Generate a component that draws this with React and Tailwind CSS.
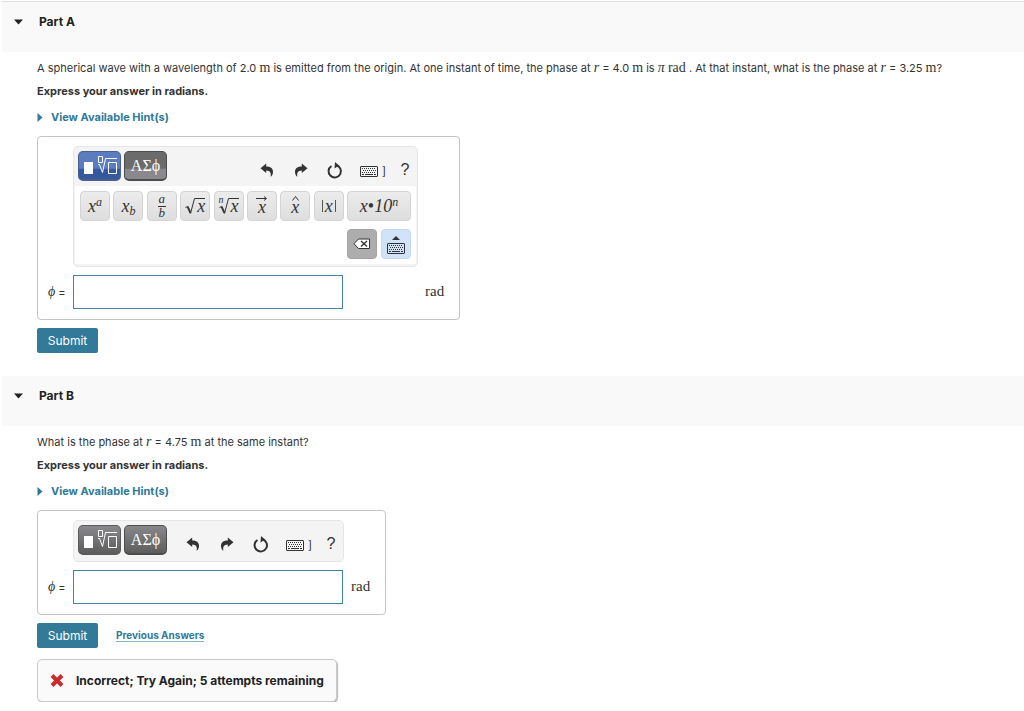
import { useState } from "react";

const toolButton = "flex h-[30px] w-[43px] items-center justify-center rounded-[5px] border border-b-2 text-white";
const keyButton = "flex h-[30px] items-center justify-center rounded-[4px] border border-[#d4d4d4] bg-linear-to-b from-[#ececec] to-[#dedede] font-[Liberation_Serif,serif] text-[18px] leading-none italic text-[#333]";
const mathText = "font-[Liberation_Serif,serif] text-[14px] leading-none";

function Unit({ children }) {
  return <span className={mathText}>{children}</span>;
}

function Var({ children }) {
  return <i className={mathText}>{children}</i>;
}

function TemplateIcon() {
  return (
    <svg width="35" height="23" viewBox="0 0 35 23" fill="none" stroke="currentColor" aria-hidden="true">
      <rect x="2" y="8" width="9" height="12" fill="currentColor" stroke="none" />
      <path d="M16.500 2.500h4v6h-4z" />
      <path d="M16 10.500h1.500l3 8L23.500 4.500H35" />
      <path d="M26.500 8.500h8v11h-8z" />
    </svg>
  );
}

function UndoIcon({ flip }) {
  return (
    <svg width="14" height="14" viewBox="0 0 14 14" fill="currentColor" className={flip ? "-scale-x-100" : ""} aria-hidden="true">
      <path d="M0.500 5.200 6.200 0.500V3.500C10.300 3.500 13 5.400 13 8.700C13 11 12.200 12.700 10.600 13.800C11.300 10.200 10.300 7.600 6.200 7.500V10Z" />
    </svg>
  );
}

function ResetIcon() {
  return (
    <svg width="16" height="17" viewBox="0 0 16 17" fill="none" stroke="currentColor" strokeWidth="2" aria-hidden="true">
      <path d="M9 3.200a6.200 6.200 0 1 1-4.500.8" />
      <path d="M8 0 12 3.400 7.500 6.400z" fill="currentColor" stroke="none" />
    </svg>
  );
}

function KeyboardIcon() {
  return (
    <svg width="18" height="11" viewBox="0 0 18 11" fill="none" stroke="currentColor" aria-hidden="true">
      <rect x="0.500" y="0.500" width="17" height="10" rx="0.500" />
      <path d="M2 2.500h14M3 4.500h13M2 6.500h14" strokeDasharray="1 1" />
      <path d="M2 8.500h2M5 8.500h8M14 8.500h2" />
    </svg>
  );
}

function BackspaceIcon() {
  return (
    <svg width="18" height="12" viewBox="0 0 18 12" fill="none" aria-hidden="true">
      <path d="M5.500 1h11v9.500h-11L1 5.700z" fill="#fff" stroke="#333" />
      <path d="m8 3 6 5.500M14 3 8 8.500" stroke="#333" strokeWidth="1.400" />
    </svg>
  );
}

function RootSign({ index }) {
  return (
    <span className="relative flex items-end">
      <svg width="20" height="18" viewBox="0 0 20 18" fill="none" stroke="currentColor" aria-hidden="true">
        <path d="M0.500 10.500 2.500 9.500" />
        <path d="m2.500 9.500 3 6.500" strokeWidth="1.800" />
        <path d="M5.500 16.500 9.500 1.500H20" />
      </svg>
      <span className="absolute right-0 bottom-0">x</span>
      {index && <span className="absolute top-0 left-0 text-[10px] leading-[6px]">{index}</span>}
    </span>
  );
}

function Accented({ path }) {
  return (
    <span className="flex flex-col items-center">
      <svg width="11" height="5" viewBox="0 0 11 5" fill="none" stroke="currentColor" aria-hidden="true">
        <path d={path} />
      </svg>
      <span className="pb-1 leading-[12px]">x</span>
    </span>
  );
}

function TemplateKeys() {
  return (
    <div className="mx-px mb-[2px] flex h-[78px] flex-col gap-2 bg-white pt-[5px] pr-[5px] pl-[5px]">
      <div className="flex justify-between">
        <button type="button" aria-label="Superscript" className={`${keyButton} w-[30px]`}>
          <span>x<sup className="text-[12px]">a</sup></span>
        </button>
        <button type="button" aria-label="Subscript" className={`${keyButton} w-[30px]`}>
          <span>x<sub className="text-[12px]">b</sub></span>
        </button>
        <button type="button" aria-label="Fraction" className={`${keyButton} w-[30px]`}>
          <span className="flex flex-col text-center text-[13px] leading-[10px]">
            <span className="border-b border-[#333] px-px pb-[2px]">a</span>
            <span className="pt-px">b</span>
          </span>
        </button>
        <button type="button" aria-label="Square root" className={`${keyButton} w-[30px]`}>
          <RootSign />
        </button>
        <button type="button" aria-label="Nth root" className={`${keyButton} w-[30px]`}>
          <RootSign index="n" />
        </button>
        <button type="button" aria-label="Vector" className={`${keyButton} w-[30px]`}>
          <Accented path="M0 2.500h10M8 0.500l2.500 2L8 4.500" />
        </button>
        <button type="button" aria-label="Unit vector" className={`${keyButton} w-[30px]`}>
          <Accented path="m2.500 4.500 3-4 3 4" />
        </button>
        <button type="button" aria-label="Absolute value" className={`${keyButton} w-[30px]`}>
          <span className="border-x border-[#555] px-[2px] leading-[12px]">x</span>
        </button>
        <button type="button" aria-label="Scientific notation" className={`${keyButton} w-[64px]`}>
          <span>x<span className="not-italic">•</span>10<sup className="text-[12px]">n</sup></span>
        </button>
      </div>
      <div className="flex justify-end gap-1">
        <button type="button" aria-label="Backspace" className="flex h-[30px] w-[30px] items-center justify-center rounded-[4px] border border-[#a5a5a5] bg-[#adadad]">
          <BackspaceIcon />
        </button>
        <button type="button" aria-label="Show keyboard" className="flex h-[30px] w-[30px] flex-col items-center justify-end gap-[3px] rounded-[4px] border border-[#c3d6ee] bg-[#d0e3fb] pb-1 text-[#333]">
          <svg width="8" height="4" viewBox="0 0 8 4" fill="currentColor" aria-hidden="true">
            <path d="M0 4 4 0l4 4z" />
          </svg>
          <KeyboardIcon />
        </button>
      </div>
    </div>
  );
}

function Palette({ expanded, onToggle }) {
  const iconButton = "flex h-[20px] w-[34px] items-center justify-center";
  return (
    <div className={`rounded-[5px] border border-[#e6e6e6] bg-[#f4f4f4] ${expanded ? "w-[345px]" : "w-[271px]"}`}>
      <div className="flex h-[39px] items-start gap-[3px] pt-1 pl-1 text-[#333]">
        <button
          type="button"
          aria-label="Templates"
          aria-pressed={expanded}
          onClick={onToggle}
          className={`${toolButton} ${expanded
            ? "border-[#4b5f8a] bg-linear-to-b from-[#5c7cc0] from-60% to-[#36589f] to-65%"
            : "border-[#5b5b5e] bg-linear-to-b from-[#89898d] to-[#5e5e5e]"}`}
        >
          <TemplateIcon />
        </button>
        <button
          type="button"
          aria-label="Symbols"
          className={`${toolButton} border-[#4c4c4c] font-[Liberation_Serif,serif] text-[16px] leading-none ${expanded
            ? "bg-linear-to-b from-[#6b6b6b] from-60% to-[#88888d] to-65%"
            : "bg-linear-to-b from-[#88888c] to-[#5e5e5e]"}`}
        >
          ΑΣϕ
        </button>
        <div className="ml-auto flex pt-[9px] pr-px">
          <button type="button" aria-label="Undo" className={iconButton}><UndoIcon /></button>
          <button type="button" aria-label="Redo" className={iconButton}><UndoIcon flip /></button>
          <button type="button" aria-label="Reset" className={iconButton}><ResetIcon /></button>
          <button type="button" aria-label="Keyboard shortcuts" className="flex h-[20px] w-[42px] items-center justify-center gap-1 pt-[3px] text-[11px] leading-none">
            <KeyboardIcon />]
          </button>
          <button type="button" aria-label="Help" className="flex h-[20px] w-[22px] items-center justify-center font-[Liberation_Sans,Arial,sans-serif] text-[16px] leading-none">?</button>
        </div>
      </div>
      {expanded ? <TemplateKeys /> : <div className="h-px" />}
    </div>
  );
}

function AnswerBox({ id, defaultExpanded }) {
  const [expanded, setExpanded] = useState(defaultExpanded);
  return (
    <div className="grid w-fit grid-cols-[25px_auto_auto] items-center gap-y-2 rounded-[4px] border border-[#c4c4c4] pt-[9px] pr-[15px] pb-[10px] pl-[10px]">
      <div className="col-start-2">
        <Palette expanded={expanded} onToggle={() => setExpanded(!expanded)} />
      </div>
      <label htmlFor={id} className="col-start-1 text-[11px] leading-4">
        <Var>ϕ</Var> =
      </label>
      <input id={id} type="text" className="h-[34px] w-[270px] border border-[#3d85a3] bg-white px-2 text-sm outline-none" />
      <span className="pb-px pl-[7px] font-[Liberation_Serif,serif] text-[15px] leading-none">rad</span>
    </div>
  );
}

function Part({ title, question, id, defaultExpanded, children }) {
  const [open, setOpen] = useState(true);
  return (
    <section>
      <h2 className="ml-[2px] h-[50px] bg-[#f9f9f9] pt-3">
        <button type="button" aria-expanded={open} onClick={() => setOpen(!open)} className="flex items-center gap-4 pl-3 text-[12px] leading-4 font-bold text-[#222]">
          <svg width="9" height="6" viewBox="0 0 9 6" fill="currentColor" aria-hidden="true">
            <path d="M0 0.500h9L4.500 5.500z" />
          </svg>
          {title}
        </button>
      </h2>
      {open && (
        <div className="px-[37px] pt-2">
          <p className="text-[11px] leading-4">{question}</p>
          <p className="pt-[7px] text-[11px] leading-4 font-bold">Express your answer in radians.</p>
          <button type="button" className="mt-[10px] mb-[11px] flex items-center gap-2 text-[11px] leading-4 font-bold text-[#2f7999]">
            <svg width="6" height="9" viewBox="0 0 6 9" fill="currentColor" aria-hidden="true">
              <path d="M0.500 0v9l5-4.500z" />
            </svg>
            View Available Hint(s)
          </button>
          <AnswerBox id={id} defaultExpanded={defaultExpanded} />
          <div className="flex items-center gap-[18px] pt-2">
            <button type="button" className="h-[25px] w-[61px] rounded-[2px] bg-[#337a99] text-[12px] text-white">
              Submit
            </button>
            {children}
          </div>
        </div>
      )}
    </section>
  );
}

export default function App() {
  return (
    <main className="bg-white pt-px font-[Inter,Arial,sans-serif] text-[#333]">
      <div className="ml-[2px] h-px bg-[#e0e2e2]" />
      <Part
        title="Part A"
        id="phase-a"
        defaultExpanded
        question={
          <>
            A spherical wave with a wavelength of 2.0 <Unit>m</Unit> is emitted from the origin. At one instant of time, the phase at <Var>r</Var> = 4.0 <Unit>m</Unit> is <Var>π</Var> <Unit>rad</Unit> . At that instant, what is the phase at <Var>r</Var> = 3.25 <Unit>m</Unit>?
          </>
        }
      />
      <div className="h-[23px]" />
      <Part
        title="Part B"
        id="phase-b"
        defaultExpanded={false}
        question={
          <>
            What is the phase at <Var>r</Var> = 4.75 <Unit>m</Unit> at the same instant?
          </>
        }
      >
        <a href="#previous" className="border-b border-[#8db5c7] text-[10px] leading-[11px] font-bold text-[#2f7999]">Previous Answers</a>
      </Part>
      <div className="mt-[11px] ml-[37px] flex h-[43px] w-fit items-center gap-3 rounded-[5px] border border-[#c9c9c9] bg-[#fafafa] px-3 shadow-[1px_1px_1px_#bbb]">
        <svg width="14" height="13" viewBox="0 0 14 13" fill="none" stroke="#cc2a2d" strokeWidth="4" aria-hidden="true">
          <path d="m2 1.500 10 10M12 1.500 2 11.500" />
        </svg>
        <strong className="text-[12px] leading-4 text-[#222]">Incorrect; Try Again; 5 attempts remaining</strong>
      </div>
    </main>
  );
}
